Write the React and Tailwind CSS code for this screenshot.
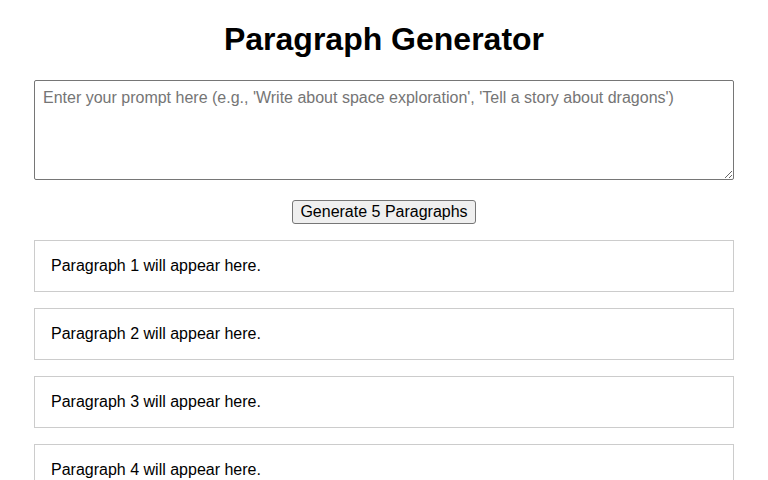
import React from "react";

function App() {
  const paragraphs = [1, 2, 3, 4, 5];

  return (
    <div className="min-h-screen bg-white font-['Liberation_Sans',Arial,sans-serif] text-black">
      <div className="max-w-[700px] mx-auto pt-[21px]">
        <h1 className="text-center text-[32px] font-bold leading-[37px] mb-[22px]">
          Paragraph Generator
        </h1>
        <textarea
          className="block w-full h-[100px] border border-[#767676] rounded-[2px] px-2 pt-2 pb-1 text-base leading-[18px] placeholder:text-[#757575] outline-none"
          placeholder="Enter your prompt here (e.g., 'Write about space exploration', 'Tell a story about dragons')"
        />
        <div className="text-center mt-5">
          <button className="h-6 bg-[#efefef] border border-[#767676] rounded-[3px] px-[7px] text-base leading-[18px] text-black">
            Generate 5 Paragraphs
          </button>
        </div>
        {paragraphs.map((n) => (
          <div key={n} className="mt-4 border border-[#ccc] p-4 leading-[18px] text-base">
            Paragraph {n} will appear here.
          </div>
        ))}
      </div>
    </div>
  );
}

export default App;
